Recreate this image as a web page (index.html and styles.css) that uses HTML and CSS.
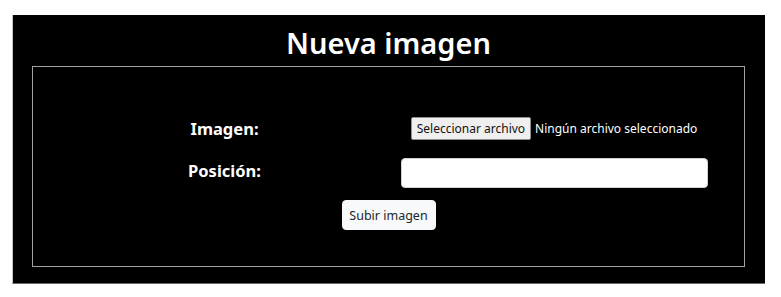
FILE: index.html
```html
<!DOCTYPE html>
<html lang="es">
<head>
<meta charset="utf-8">
<title>Nueva imagen</title>
<link rel="stylesheet" href="styles.css">
</head>
<body>
<div class="panel">
  <h1 class="title">Nueva imagen</h1>
  <form class="frame">
    <div class="grid">
      <label class="label">Imagen:</label>
      <div class="cell">
        <span class="file">
          <button type="button" class="file-btn">Seleccionar archivo</button>
          <span class="file-name">Ningún archivo seleccionado</span>
        </span>
      </div>
      <label class="label label-pos">Posición:</label>
      <div class="cell">
        <input class="text-input" type="text">
      </div>
      <div class="actions">
        <button type="button" class="submit">Subir imagen</button>
      </div>
    </div>
  </form>
</div>
</body>
</html>
```
FILE: styles.css
```css
html, body {
  margin: 0;
  padding: 0;
  background: #fff;
}
body {
  padding: 15px 16px 13px 12px;
  font-family: "Noto Sans", "Open Sans", sans-serif;
}
.panel {
  background: #000;
  padding: 0 20px 16px 19px;
  border-left: 1px solid #c4c4c4;
  border-bottom: 1px solid #6a6a6a;
}
.title {
  margin: 0;
  height: 51px;
  line-height: 56px;
  text-align: center;
  color: #fff;
  font-size: 29px;
  font-weight: 600;
}
.frame {
  display: block;
  border: 1px solid #a0a0a0;
  padding: 50px 0 36px;
}
.grid {
  display: grid;
  grid-template-columns: 331px 328px;
  justify-content: center;
}
.label {
  color: #fff;
  font-weight: 700;
  font-size: 16.5px;
  display: flex;
  align-items: center;
  justify-content: center;
}
.label-pos {
  padding-bottom: 6px;
  box-sizing: border-box;
}
.cell {
  display: flex;
  align-items: center;
  justify-content: center;
}
.grid > :nth-child(1), .grid > :nth-child(2) {
  height: 23px;
  margin-bottom: 18px;
}
.grid > :nth-child(3), .grid > :nth-child(4) {
  height: 30px;
  margin-bottom: 12px;
}
.file {
  display: flex;
  align-items: center;
  gap: 4px;
  color: #fff;
  font-size: 12px;
}
.file-btn {
  height: 23px;
  padding: 0 5px;
  background: #efefef;
  border: 1px solid #8f8f8f;
  border-radius: 2px;
  color: #111;
  font-family: inherit;
  font-size: 12px;
}
.file-name {
  white-space: nowrap;
}
.text-input {
  width: 307px;
  height: 30px;
  box-sizing: border-box;
  border: 1px solid #ced4da;
  border-radius: 4px;
  background: #fff;
}
.actions {
  grid-column: 1 / 3;
  display: flex;
  justify-content: center;
}
.submit {
  width: 94px;
  height: 30px;
  background: #f8f9fa;
  border: 1px solid #f8f9fa;
  border-radius: 4px;
  color: #212529;
  font-family: inherit;
  font-size: 12.5px;
  padding: 0;
}
```
